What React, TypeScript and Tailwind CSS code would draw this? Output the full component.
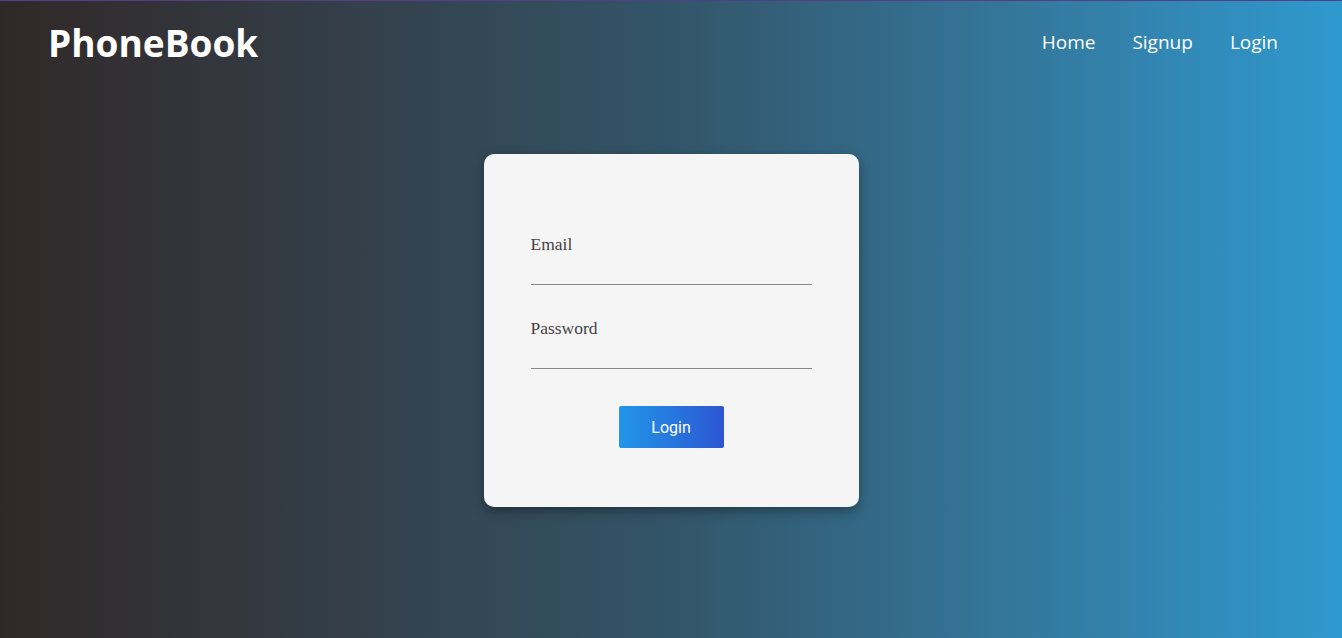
export default function App() {
  return (
    <div className="min-h-screen w-full border-t border-[#553d88] bg-gradient-to-r from-[#302828] via-[#325569] to-[#2e99cf]">
      {/* navbar */}
      <nav className="flex h-[83px] items-center justify-between pl-12 pr-16 font-['Open_Sans',sans-serif] text-white">
        <h1 className="text-[37px] font-bold">PhoneBook</h1>
        <ul className="flex items-center gap-[37px] text-[19px]">
          <li>Home</li>
          <li>Signup</li>
          <li>Login</li>
        </ul>
      </nav>

      {/* card */}
      <div className="mx-auto mt-[70px] w-[375px] rounded-[10px] bg-[#f5f5f5] px-[47px] pt-[78px] pb-[59px] shadow-[0_4px_12px_rgba(0,0,0,0.35)]">
        <form className="flex flex-col">
          <label className="h-6 font-['Liberation_Serif',serif] text-[17.5px] leading-6 text-[#444]">Email</label>
          <input type="email" className="h-[29px] border-b border-[#888] bg-transparent outline-none" />

          <label className="mt-[31px] h-6 font-['Liberation_Serif',serif] text-[17.5px] leading-6 text-[#444]">Password</label>
          <input type="password" className="h-[29px] border-b border-[#888] bg-transparent outline-none" />

          <button
            type="button"
            className="mx-auto mt-[37px] h-[42px] w-[105px] rounded-[2px] bg-gradient-to-r from-[#2196e8] to-[#2c55d3] pt-px font-['Roboto',sans-serif] text-[16px] text-white"
          >
            Login
          </button>
        </form>
      </div>
    </div>
  );
}
